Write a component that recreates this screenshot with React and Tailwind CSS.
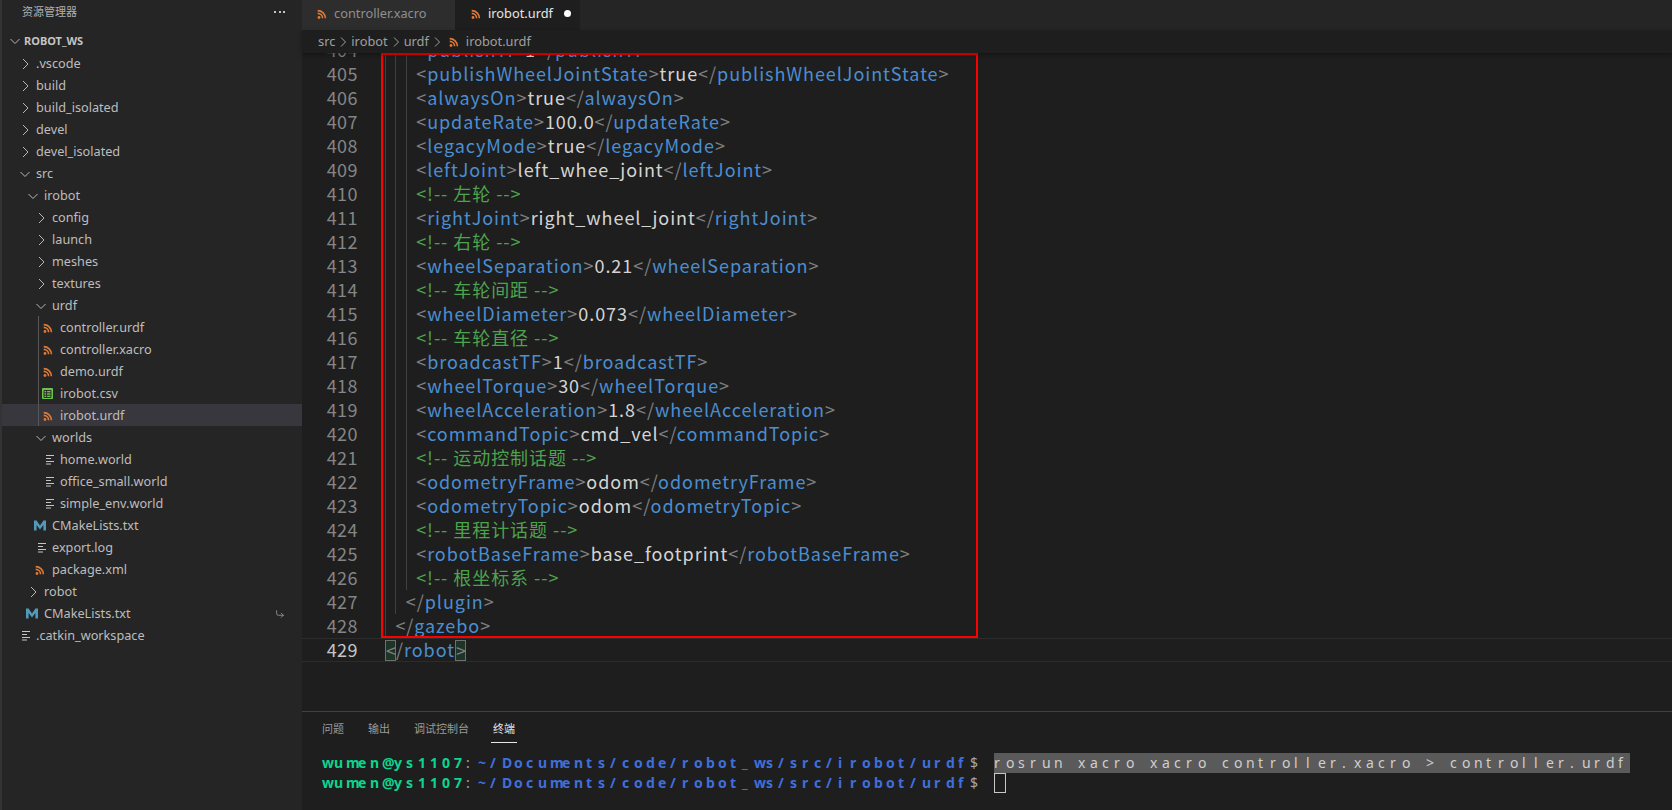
import { CornerDownRight } from 'lucide-react'

const uiFont = "font-['Noto_Sans','Noto_Sans_CJK_SC',sans-serif]"

const RssIcon = ({ className = '' }) => (
  <svg viewBox="0 0 16 16" className={`h-4 w-4 shrink-0 ${className}`} fill="none" stroke="#e37933">
    <circle cx="5" cy="11.5" r="1.4" fill="#e37933" stroke="none" />
    <path d="M3.7 7.4a4.9 4.9 0 0 1 4.9 4.9" strokeWidth="1.6" />
    <path d="M3.7 4.6a7.7 7.7 0 0 1 7.7 7.7" strokeWidth="1.6" />
  </svg>
)

const LinesIcon = () => (
  <svg viewBox="0 0 16 16" className="h-4 w-4 shrink-0" stroke="#c5c5c5" strokeWidth="1">
    <path d="M4 4.5h8M4 7.5h5M4 10.5h8M4 13h5" transform="translate(2 -1)" />
  </svg>
)

const CsvIcon = () => (
  <svg viewBox="0 0 16 16" className="h-4 w-4 shrink-0">
    <rect x="2" y="2" width="11" height="11" rx="1" fill="#6cc24a" />
    <path d="M4 4.5h7v7H4z M4 6.8h7 M4 9.2h7 M6.6 4.5v7" fill="none" stroke="#252526" strokeWidth="0.9" />
  </svg>
)

const CmakeIcon = () => (
  <svg viewBox="0 0 16 16" className="h-4 w-4 shrink-0" fill="#519aba">
    <path d="M2 2.5h2.6L8 7.6l3.4-5.1H14v10h-2.6V7L8 11.6 4.6 7v5.5H2z" />
  </svg>
)

const Chevron = ({ open }) => (
  <svg viewBox="0 0 16 16" className="h-4 w-4 shrink-0" fill="none" stroke="#b8b8b8" strokeWidth="1">
    {open ? <path d="M4.5 6l4.5 4.5L13.5 6" /> : <path d="M7 3l5 5-5 5" />}
  </svg>
)

const icons = { rss: RssIcon, lines: LinesIcon, csv: CsvIcon, cmake: CmakeIcon }

// [name, depth, kind, extra]
const tree = [
  ['.vscode', 1, 'closed'],
  ['build', 1, 'closed'],
  ['build_isolated', 1, 'closed'],
  ['devel', 1, 'closed'],
  ['devel_isolated', 1, 'closed'],
  ['src', 1, 'open'],
  ['irobot', 2, 'open'],
  ['config', 3, 'closed'],
  ['launch', 3, 'closed'],
  ['meshes', 3, 'closed'],
  ['textures', 3, 'closed'],
  ['urdf', 3, 'open'],
  ['controller.urdf', 4, 'rss', 'guide'],
  ['controller.xacro', 4, 'rss', 'guide'],
  ['demo.urdf', 4, 'rss', 'guide'],
  ['irobot.csv', 4, 'csv', 'guide'],
  ['irobot.urdf', 4, 'rss', 'selected'],
  ['worlds', 3, 'open'],
  ['home.world', 4, 'lines'],
  ['office_small.world', 4, 'lines'],
  ['simple_env.world', 4, 'lines'],
  ['CMakeLists.txt', 3, 'cmake'],
  ['export.log', 3, 'lines'],
  ['package.xml', 3, 'rss'],
  ['robot', 2, 'closed'],
  ['CMakeLists.txt', 2, 'cmake', 'link'],
  ['.catkin_workspace', 1, 'lines']
]

const TreeRow = ({ name, depth, kind, extra }) => {
  const Icon = icons[kind]
  const selected = extra === 'selected'
  return (
    <div
      className={`relative flex h-[22px] items-center pt-[2px] text-[12.7px] text-[#bdbdbd] ${selected ? 'bg-[#37373d]' : ''}`}
      style={{ paddingLeft: 6 + 8 * depth }}
    >
      {(extra === 'guide' || selected) && <span className="absolute top-0 bottom-0 left-[36px] w-px bg-[#585858]" />}
      {Icon ? <Icon /> : <Chevron open={kind === 'open'} />}
      <span className="ml-1">{name}</span>
      {extra === 'link' && <CornerDownRight size={10} className="absolute right-[17px] text-[#9a9a9a]" />}
    </div>
  )
}

const Sidebar = () => (
  <aside className={`flex w-[300px] shrink-0 flex-col bg-[#252526] ${uiFont}`}>
    <div className="flex h-[30px] items-center justify-between pr-[17px] pb-[6px] pl-[20px] text-[11px] text-[#b0b0b0]">
      <span>资源管理器</span>
      <span className="flex gap-[2.5px]">
        <i className="h-[2px] w-[2px] bg-[#c5c5c5]" />
        <i className="h-[2px] w-[2px] bg-[#c5c5c5]" />
        <i className="h-[2px] w-[2px] bg-[#c5c5c5]" />
      </span>
    </div>
    <div className="flex h-[22px] items-center pl-1 text-[11px] font-bold text-[#c4c4c4]">
      <Chevron open />
      <span className="ml-[2px]">ROBOT_WS</span>
    </div>
    {tree.map(([name, depth, kind, extra], i) => (
      <TreeRow key={i} name={name} depth={depth} kind={kind} extra={extra} />
    ))}
  </aside>
)

const Tabs = () => (
  <div className={`flex h-[30px] shrink-0 bg-[#252526] text-[12.8px] ${uiFont}`}>
    <div className="flex w-[153px] items-center bg-[#2d2d2d] pb-[3px] pl-[12px] text-[#8f8f8f]">
      <RssIcon />
      <span className="ml-[4px]">controller.xacro</span>
    </div>
    <div className="flex w-[125px] items-center bg-[#1e1e1e] pb-[3px] pl-[13px] text-[#e6e6e6]">
      <RssIcon />
      <span className="ml-[4px]">irobot.urdf</span>
      <span className="ml-[11px] h-[7px] w-[7px] rounded-full bg-white" />
    </div>
  </div>
)

const CrumbSep = () => (
  <svg viewBox="0 0 8 16" className="mx-[4px] h-4 w-2 shrink-0" fill="none" stroke="#a0a0a0" strokeWidth="1">
    <path d="M2 3.5l4.5 4.5L2 12.5" />
  </svg>
)

const Breadcrumbs = () => (
  <div className={`relative z-10 flex h-[23px] shrink-0 items-center bg-[#1e1e1e] pl-4 text-[12.8px] text-[#a0a0a0] shadow-[0_2px_4px_#00000055] ${uiFont}`}>
    <span>src</span>
    <CrumbSep />
    <span>irobot</span>
    <CrumbSep />
    <span>urdf</span>
    <CrumbSep />
    <RssIcon className="ml-[1px]" />
    <span className="ml-[4px]">irobot.urdf</span>
  </div>
)

const Br = ({ children }) => <span className="text-[#808080]">{children}</span>
const Name = ({ children }) => <span className="text-[#4b8ed1]">{children}</span>

const Tag = ({ name, value }) => (
  <>
    <Br>&lt;</Br>
    <Name>{name}</Name>
    <Br>&gt;</Br>
    <span className="text-[#d4d4d4]">{value}</span>
    <Br>&lt;/</Br>
    <Name>{name}</Name>
    <Br>&gt;</Br>
  </>
)

const Comment = ({ text }) => <span className="text-[#4da34d]">{`<!-- ${text} -->`}</span>

const code = [
  [404, 'publishTf', '1'],
  [405, 'publishWheelJointState', 'true'],
  [406, 'alwaysOn', 'true'],
  [407, 'updateRate', '100.0'],
  [408, 'legacyMode', 'true'],
  [409, 'leftJoint', 'left_whee_joint'],
  [410, null, '左轮'],
  [411, 'rightJoint', 'right_wheel_joint'],
  [412, null, '右轮'],
  [413, 'wheelSeparation', '0.21'],
  [414, null, '车轮间距'],
  [415, 'wheelDiameter', '0.073'],
  [416, null, '车轮直径'],
  [417, 'broadcastTF', '1'],
  [418, 'wheelTorque', '30'],
  [419, 'wheelAcceleration', '1.8'],
  [420, 'commandTopic', 'cmd_vel'],
  [421, null, '运动控制话题'],
  [422, 'odometryFrame', 'odom'],
  [423, 'odometryTopic', 'odom'],
  [424, null, '里程计话题'],
  [425, 'robotBaseFrame', 'base_footprint'],
  [426, null, '根坐标系']
]

const Guides = ({ count }) =>
  Array.from({ length: count }).map((_, i) => (
    <span key={i} className="h-6 w-[10.4px] shrink-0 border-l border-[#404040]" />
  ))

const Line = ({ n, indent, active, children }) => (
  <div className={`flex h-6 items-center ${active ? 'border-y border-[#2c2c2c]' : ''}`}>
    <span className={`relative -top-px w-[56px] shrink-0 text-right tracking-[0.45px] ${active ? 'text-[#c6c6c6]' : 'text-[#858585]'}`}>{n}</span>
    <span className="w-[27px] shrink-0" />
    <Guides count={indent} />
    <span className="relative -top-px whitespace-pre tracking-[0.95px]">{children}</span>
  </div>
)

const Editor = () => (
  <div className="relative min-h-0 flex-1 overflow-hidden bg-[#1e1e1e] font-['Noto_Sans_CJK_SC',sans-serif] text-[18px] leading-6">
    <div className="mt-[-15px]">
      {code.map(([n, name, value]) => (
        <Line key={n} n={n} indent={3}>
          {name ? <Tag name={name} value={value} /> : <Comment text={value} />}
        </Line>
      ))}
      <Line n={427} indent={2}>
        <Br>&lt;/</Br>
        <Name>plugin</Name>
        <Br>&gt;</Br>
      </Line>
      <Line n={428} indent={1}>
        <Br>&lt;/</Br>
        <Name>gazebo</Name>
        <Br>&gt;</Br>
      </Line>
      <Line n={429} indent={0} active>
        <span className="relative top-px inline-block h-[21px] w-[11px] border border-[#6f6f6f] bg-[#1d3526] text-center leading-[19px] tracking-normal text-[#808080]">&lt;</span>
        <Br>/</Br>
        <Name>robot</Name>
        <span className="relative top-px inline-block h-[21px] w-[11px] border border-[#6f6f6f] bg-[#1d3526] text-center leading-[19px] tracking-normal text-[#808080]">&gt;</span>
      </Line>
    </div>
    <div className="absolute top-0 left-[79px] h-[585px] w-[597px] border-2 border-[#ff0000]" />
  </div>
)

const Cells = ({ text, className = '' }) => (
  <span className={className}>
    {[...text].map((c, i) => (
      <span key={i} className="inline-block w-3 shrink-0 whitespace-pre">
        {c}
      </span>
    ))}
  </span>
)

const Prompt = () => (
  <>
    <Cells text="wumen@ys1107" className="font-bold text-[#0dd48f]" />
    <Cells text=":" className="text-[#a8a8a8]" />
    <Cells text="~/Documents/code/robot_ws/src/irobot/urdf" className="font-bold text-[#3f6fdc]" />
    <Cells text="$ " className="text-[#a8a8a8]" />
  </>
)

const Panel = () => (
  <div className={`h-[99px] shrink-0 border-t border-[#414141] bg-[#1e1e1e] pl-5 ${uiFont}`}>
    <div className="flex h-[30px] gap-[24px] pt-[9px] text-[11px] text-[#9a9a9a]">
      <span>问题</span>
      <span>输出</span>
      <span>调试控制台</span>
      <span className="relative text-[#e0e0e0]">
        终端
        <span className="absolute right-[-2px] bottom-[-1px] left-[-2px] h-px bg-[#e7e7e7]" />
      </span>
    </div>
    <div className="mt-[11px] flex h-5 items-center text-[14px] leading-5 text-[#cccccc]">
      <Prompt />
      <span className="bg-[#5a5a5a] text-[#cfcfcf]">
        <Cells text="rosrun xacro xacro controller.xacro > controller.urdf" />
      </span>
    </div>
    <div className="flex h-5 items-center text-[14px] leading-5">
      <Prompt />
      <span className="h-5 w-3 border border-[#c8c8c8]" />
    </div>
  </div>
)

const App = () => (
  <div className="flex h-screen w-full overflow-hidden bg-[#1e1e1e]">
    <div className="w-[2px] shrink-0 bg-[#333333]" />
    <Sidebar />
    <main className="flex min-w-0 flex-1 flex-col">
      <Tabs />
      <Breadcrumbs />
      <Editor />
      <Panel />
    </main>
  </div>
)

export default App
